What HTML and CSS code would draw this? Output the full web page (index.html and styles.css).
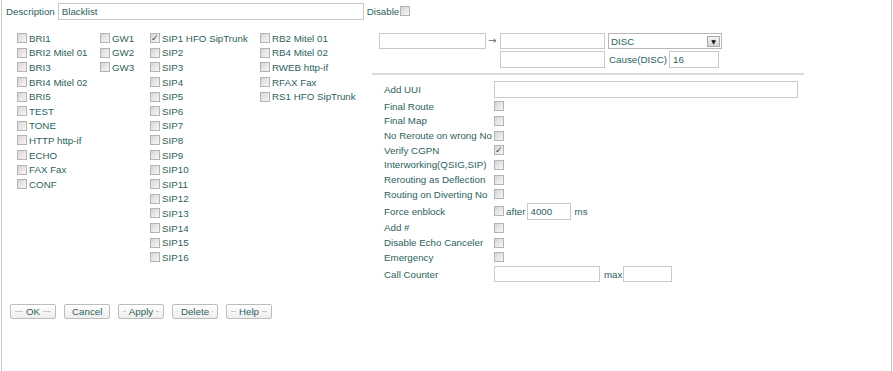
FILE: index.html
```html
<!DOCTYPE html>
<html>
<head>
    <title>Route</title>
    <link rel="stylesheet" href="styles.css">
</head>
<body>
    <div class="page">
        <div class="desc-row">
            <label for="desc">Description</label>
            <input type="text" id="desc" class="desc" value="Blacklist">
            <label for="disable" class="disable">Disable</label>
            <input type="checkbox" id="disable">
        </div>

        <div class="main">
            <div class="ports">
                <div class="col">
                    <label><input type="checkbox">BRI1</label>
                    <label><input type="checkbox">BRI2 Mitel 01</label>
                    <label><input type="checkbox">BRI3</label>
                    <label><input type="checkbox">BRI4 Mitel 02</label>
                    <label><input type="checkbox">BRI5</label>
                    <label><input type="checkbox">TEST</label>
                    <label><input type="checkbox">TONE</label>
                    <label><input type="checkbox">HTTP http-if</label>
                    <label><input type="checkbox">ECHO</label>
                    <label><input type="checkbox">FAX Fax</label>
                    <label><input type="checkbox">CONF</label>
                </div>
                <div class="col">
                    <label><input type="checkbox">GW1</label>
                    <label><input type="checkbox">GW2</label>
                    <label><input type="checkbox">GW3</label>
                </div>
                <div class="col">
                    <label><input type="checkbox" checked>SIP1 HFO SipTrunk</label>
                    <label><input type="checkbox">SIP2</label>
                    <label><input type="checkbox">SIP3</label>
                    <label><input type="checkbox">SIP4</label>
                    <label><input type="checkbox">SIP5</label>
                    <label><input type="checkbox">SIP6</label>
                    <label><input type="checkbox">SIP7</label>
                    <label><input type="checkbox">SIP8</label>
                    <label><input type="checkbox">SIP9</label>
                    <label><input type="checkbox">SIP10</label>
                    <label><input type="checkbox">SIP11</label>
                    <label><input type="checkbox">SIP12</label>
                    <label><input type="checkbox">SIP13</label>
                    <label><input type="checkbox">SIP14</label>
                    <label><input type="checkbox">SIP15</label>
                    <label><input type="checkbox">SIP16</label>
                </div>
                <div class="col">
                    <label><input type="checkbox">RB2 Mitel 01</label>
                    <label><input type="checkbox">RB4 Mitel 02</label>
                    <label><input type="checkbox">RWEB http-if</label>
                    <label><input type="checkbox">RFAX Fax</label>
                    <label><input type="checkbox">RS1 HFO SipTrunk</label>
                </div>
            </div>

            <div class="route">
                <div class="map">
                    <input type="text" class="num">
                    <span class="arrow">&rarr;</span>
                    <input type="text" class="num2">
                    <div class="select">
                        <select>
                            <option>DISC</option>
                        </select>
                        <span class="drop">&#9660;</span>
                    </div>
                    <input type="text" class="num2 second">
                    <div class="cause">
                        <span>Cause(DISC)</span>
                        <input type="text" class="cause-in" value="16">
                    </div>
                </div>

                <div class="sep"></div>

                <div class="opts">
                    <div class="opt tall">
                        <span class="lbl">Add UUI</span>
                        <input type="text" class="uui">
                    </div>
                    <div class="opt"><span class="lbl">Final Route</span><input type="checkbox"></div>
                    <div class="opt"><span class="lbl">Final Map</span><input type="checkbox"></div>
                    <div class="opt"><span class="lbl">No Reroute on wrong No</span><input type="checkbox"></div>
                    <div class="opt"><span class="lbl">Verify CGPN</span><input type="checkbox" checked></div>
                    <div class="opt"><span class="lbl">Interworking(QSIG,SIP)</span><input type="checkbox"></div>
                    <div class="opt"><span class="lbl">Rerouting as Deflection</span><input type="checkbox"></div>
                    <div class="opt"><span class="lbl">Routing on Diverting No</span><input type="checkbox"></div>
                    <div class="opt tall">
                        <span class="lbl">Force enblock</span>
                        <input type="checkbox">
                        <span class="after">after</span>
                        <input type="text" class="ms-in" value="4000">
                        <span class="ms">ms</span>
                    </div>
                    <div class="opt"><span class="lbl">Add #</span><input type="checkbox"></div>
                    <div class="opt"><span class="lbl">Disable Echo Canceler</span><input type="checkbox"></div>
                    <div class="opt"><span class="lbl">Emergency</span><input type="checkbox"></div>
                    <div class="opt tall">
                        <span class="lbl">Call Counter</span>
                        <input type="text" class="counter">
                        <span class="max">max</span>
                        <input type="text" class="max-in">
                    </div>
                </div>
            </div>
        </div>

        <div class="buttons">
            <button type="button">OK</button>
            <button type="button">Cancel</button>
            <button type="button">Apply</button>
            <button type="button">Delete</button>
            <button type="button">Help</button>
        </div>
    </div>
</body>
</html>
```

FILE: styles.css
```css
body {
    margin: 0;
    font-family: "Liberation Sans", Arial, sans-serif;
    font-size: 9.75px;
    color: #2d5f5c;
    background: #fff;
}
.page {
    margin-left: 1px;
    width: 889px;
    height: 371px;
    border-left: 1px solid #c8c8c8;
    border-right: 1px solid #c8c8c8;
}
input[type="text"] {
    box-sizing: border-box;
    height: 17px;
    border: 1px solid #c9c9c9;
    padding: 0 3px;
    margin: 0;
    font-family: inherit;
    font-size: 9.75px;
    color: #2d5f5c;
    background: #fff;
    outline: none;
}
input[type="checkbox"] {
    -webkit-appearance: none;
    appearance: none;
    box-sizing: border-box;
    width: 10px;
    height: 10px;
    margin: 0 2px 0 0;
    border: 1px solid #b4b4b4;
    background: linear-gradient(135deg, #d6d6d6, #f7f7f7);
    position: relative;
    flex: none;
}
input[type="checkbox"]:checked::after {
    content: "\2713";
    position: absolute;
    left: 0;
    top: -2px;
    font-size: 9px;
    line-height: 12px;
    color: #444;
}

/* description */
.desc-row {
    display: flex;
    align-items: center;
    height: 17px;
    padding: 3px 0 0 4px;
}
.desc {
    width: 306px;
    margin-left: 3px !important;
}
.disable {
    margin-left: 3px;
}
.desc-row input[type="checkbox"] {
    margin-left: 1px;
    align-self: flex-start;
    margin-top: 3px;
}

/* ports */
.main {
    display: flex;
    margin-top: 11px;
    padding-left: 15px;
}
.ports {
    width: 355px;
    display: grid;
    grid-template-columns: 83px 50px 110px auto;
    align-items: start;
}
.col label {
    display: flex;
    align-items: center;
    height: 14.6px;
    white-space: nowrap;
}

/* number mapping */
.route {
    width: 433px;
}
.map {
    display: grid;
    grid-template-columns: 107px 14px 105px auto;
    row-gap: 2px;
    padding-left: 7px;
    margin-top: 2px;
    align-items: center;
}
.num {
    width: 107px;
    height: 16px !important;
}
.num2 {
    width: 105px;
    height: 16px !important;
}
.second {
    grid-column: 3;
    height: 17px !important;
}
.arrow {
    font-family: "DejaVu Sans", sans-serif;
    font-size: 10px;
    color: #666;
    padding-left: 2px;
    line-height: 10px;
}
.select {
    display: flex;
    align-items: center;
    box-sizing: border-box;
    width: 114px;
    height: 16px;
    margin-left: 3px;
    border: 1px solid #b8b8b8;
    background: #fff;
}
.select select {
    -webkit-appearance: none;
    appearance: none;
    flex: 1;
    border: none;
    background: transparent;
    font-family: inherit;
    font-size: 9.75px;
    color: #2d5f5c;
    padding: 0 0 0 2px;
    outline: none;
}
.drop {
    box-sizing: border-box;
    width: 13px;
    height: 11px;
    margin-right: 1px;
    border: 1px solid #aaa;
    background: linear-gradient(#f4f4f4, #d4d4d4);
    font-family: "DejaVu Sans", sans-serif;
    font-size: 6px;
    line-height: 9px;
    text-align: center;
    color: #111;
}
.cause {
    display: flex;
    align-items: center;
    padding-left: 4px;
}
.cause-in {
    width: 50px;
    margin-left: 2px !important;
}
.sep {
    height: 2px;
    margin-top: 5px;
    width: 432px;
    background: #d8e0df;
}

/* options */
.opts {
    padding-left: 12px;
    margin-top: 5px;
}
.opt {
    display: flex;
    align-items: center;
    height: 14.67px;
    white-space: nowrap;
}
.opt.tall {
    height: 19px;
}
.lbl {
    width: 110px;
    flex: none;
}
.uui {
    width: 304px;
}
.after {
    margin-left: 0;
}
.ms-in {
    width: 44px;
    margin-left: 1px !important;
}
.ms {
    margin-left: 4px;
}
.counter {
    width: 106px;
    height: 16px !important;
}
.max {
    margin-left: 4px;
}
.max-in {
    width: 49px;
    height: 16px !important;
    margin-left: 1px !important;
}

/* buttons */
.buttons {
    display: flex;
    gap: 8px;
    padding-left: 8px;
    margin-top: 20px;
}
button {
    display: inline-flex;
    align-items: center;
    box-sizing: border-box;
    width: 46px;
    height: 15px;
    padding: 0 1px;
    border: 1px solid #bdbdbd;
    border-radius: 2px;
    background: linear-gradient(#ffffff, #eeeeee);
    font-family: inherit;
    font-size: 9.75px;
    color: #2d5f5c;
}
button::before,
button::after {
    content: "";
    flex: 1;
    height: 1px;
    background: #c8c8c8;
    margin: 0 3px;
}
```
